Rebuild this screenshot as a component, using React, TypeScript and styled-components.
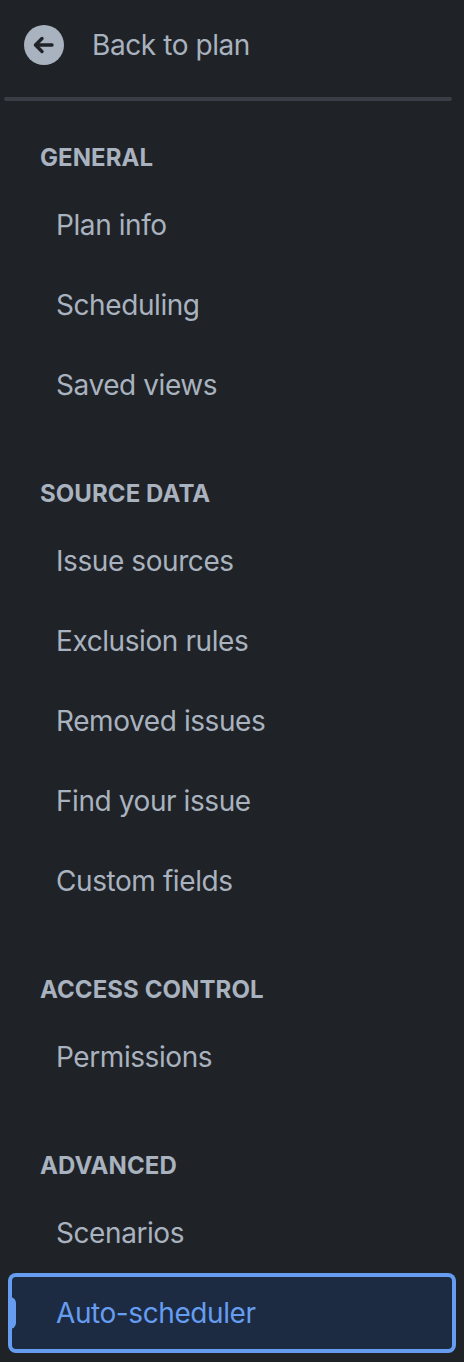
import React from "react";
import styled, { createGlobalStyle } from "styled-components";

const Global = createGlobalStyle`
  html, body { margin: 0; padding: 0; background: #1f2227; }
  body { font-family: Inter, "Liberation Sans", sans-serif; }
`;

const Page = styled.nav`
  width: 464px;
  height: 1362px;
  overflow: hidden;
  background: #1f2227;
  display: flex;
  flex-direction: column;
`;

const BackRow = styled.a`
  display: flex;
  align-items: center;
  gap: 28px;
  height: 90px;
  padding-left: 24px;
  color: #a9b2bf;
  font-size: 28px;
  line-height: 40px;
  letter-spacing: -0.42px;
`;

const BackCircle = styled.span`
  width: 40px;
  height: 40px;
  border-radius: 50%;
  background: #a9b2bf;
  display: flex;
  align-items: center;
  justify-content: center;
`;

const Divider = styled.div`
  width: 448px;
  height: 4px;
  margin: 7px 0 0 4px;
  border-radius: 2px;
  background: #383d46;
`;

const Sections = styled.div`
  display: flex;
  flex-direction: column;
  gap: 52px;
  padding: 40px 8px 0;
`;

const Section = styled.section`
  display: flex;
  flex-direction: column;
  gap: 12px;
`;

const Heading = styled.h2`
  margin: 0;
  padding-left: 32px;
  height: 32px;
  font-size: 24px;
  line-height: 34px;
  font-weight: 700;
  letter-spacing: 0.08px;
  color: #a9b2bf;
`;

const List = styled.div`
  display: flex;
  flex-direction: column;
`;

const Item = styled.a<{ $active?: boolean }>`
  position: relative;
  box-sizing: border-box;
  height: 80px;
  display: flex;
  align-items: center;
  padding-left: 48px;
  font-size: 28px;
  line-height: 40px;
  letter-spacing: -0.42px;
  color: ${(p) => (p.$active ? "#669df1" : "#a9b2bf")};
  background: ${(p) => (p.$active ? "#1c2b42" : "transparent")};
  border-radius: ${(p) => (p.$active ? "8px" : "0")};
  box-shadow: ${(p) => (p.$active ? "inset 0 0 0 4px #669df1" : "none")};
`;

const Marker = styled.span`
  position: absolute;
  left: 0;
  top: 24px;
  width: 8px;
  height: 32px;
  background: #669df1;
  border-radius: 0 6px 6px 0;
`;

const groups: { title: string; items: string[] }[] = [
  { title: "GENERAL", items: ["Plan info", "Scheduling", "Saved views"] },
  {
    title: "SOURCE DATA",
    items: ["Issue sources", "Exclusion rules", "Removed issues", "Find your issue", "Custom fields"],
  },
  { title: "ACCESS CONTROL", items: ["Permissions"] },
  { title: "ADVANCED", items: ["Scenarios", "Auto-scheduler"] },
];

export default function App() {
  return (
    <Page>
      <Global />
      <BackRow>
        <BackCircle>
          <svg width="24" height="24" viewBox="0 0 24 24" fill="none" stroke="#1f2227" strokeWidth="3.4" strokeLinecap="round" strokeLinejoin="round">
            <path d="M20 12H4" />
            <path d="M10 5.5 3.5 12l6.5 6.5" />
          </svg>
        </BackCircle>
        Back to plan
      </BackRow>
      <Divider />
      <Sections>
        {groups.map((g) => (
          <Section key={g.title}>
            <Heading>{g.title}</Heading>
            <List>
              {g.items.map((i) => {
                const active = i === "Auto-scheduler";
                return (
                  <Item key={i} $active={active}>
                    {active && <Marker />}
                    {i}
                  </Item>
                );
              })}
            </List>
          </Section>
        ))}
      </Sections>
    </Page>
  );
}
